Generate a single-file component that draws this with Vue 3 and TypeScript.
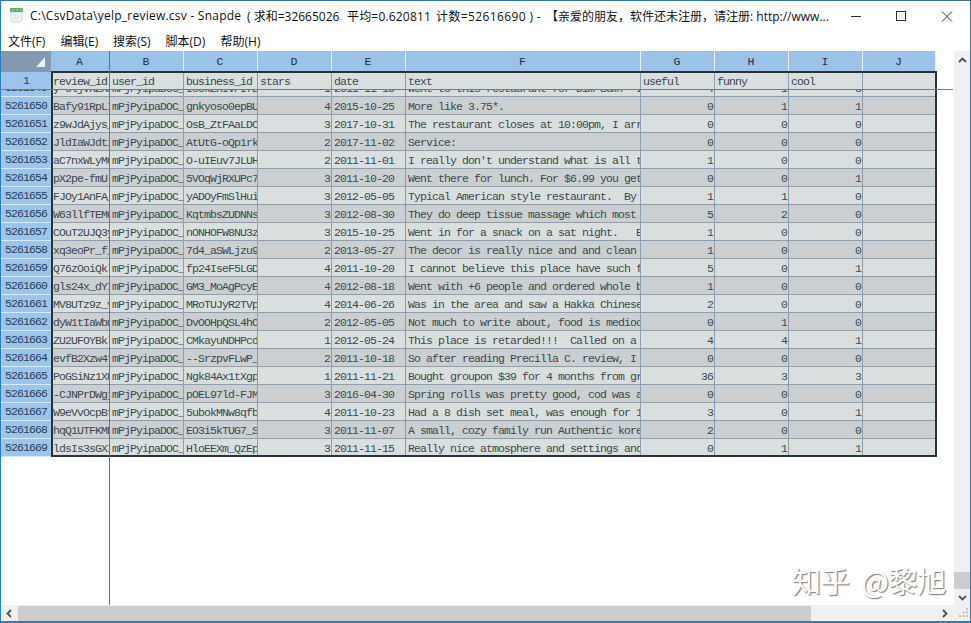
<script setup lang="ts">
interface Row {
  id: string
  cells: string[]
}

const letters = ['A', 'B', 'C', 'D', 'E', 'F', 'G', 'H', 'I', 'J']
const titles = ['review_id', 'user_id', 'business_id', 'stars', 'date', 'text', 'useful', 'funny', 'cool', '']
const menus = ['文件(F)', '编辑(E)', '搜索(S)', '脚本(D)', '帮助(H)']
const user = 'mPjPyipaDOC_'

const source: string[][] = [
  ['y-6ljvXZXm', 'IoOkZhIvPIfB', '1', '2011-11-16', 'Went to this restaurant for Dim Sum.  I', '4', '1', '3'],
  ['Bafy91RpLI', 'gnkyoso0epBU', '4', '2015-10-25', 'More like 3.75*.', '0', '1', '1'],
  ['z9wJdAjys_', 'OsB_ZtFAaLDC', '3', '2017-10-31', 'The restaurant closes at 10:00pm, I arr', '0', '0', '0'],
  ['JldIaWJdti', 'AtUtG-oQp1rk', '2', '2017-11-02', 'Service:', '0', '0', '0'],
  ['aC7nxWLyMO', 'O-uIEuv7JLUH', '2', '2011-11-01', "I really don't understand what is all t", '1', '0', '0'],
  ['pX2pe-fmU', '5VOqWjRXUPc7', '3', '2011-10-20', 'Went there for lunch. For $6.99 you get', '0', '0', '1'],
  ['FJOy1AnFA_', 'yADOyFmSlHui', '3', '2012-05-05', 'Typical American style restaurant.  By', '1', '1', '0'],
  ['W63llfTEMO', 'KqtmbsZUDNNs', '3', '2012-08-30', 'They do deep tissue massage which most', '5', '2', '0'],
  ['COuT2UJQ3y', 'nONHOFW8NU3z', '3', '2015-10-25', 'Went in for a snack on a sat night.   B', '1', '0', '0'],
  ['xq3eoPr_f_', '7d4_aSWLjzu9', '2', '2013-05-27', 'The decor is really nice and and clean', '1', '0', '0'],
  ['Q76zOoiQkl', 'fp24IseF5LGD', '4', '2011-10-20', 'I cannot believe this place have such f', '5', '0', '1'],
  ['gls24x_dYI', 'GM3_MoAgPcyE', '4', '2012-08-18', 'Went with +6 people and ordered whole b', '1', '0', '0'],
  ['MV8UTz9z_v', 'MRoTUJyR2TVp', '4', '2014-06-26', 'Was in the area and saw a Hakka Chinese', '2', '0', '0'],
  ['dyW1tIaWbm', 'DvOOHpQSL4hO', '2', '2012-05-05', 'Not much to write about, food is medioc', '0', '1', '0'],
  ['ZU2UFOYBkl', 'CMkayuNDHPcd', '1', '2012-05-24', 'This place is retarded!!!  Called on a', '4', '4', '1'],
  ['evfB2Xzw4t', '--SrzpvFLwP_', '2', '2011-10-18', 'So after reading Precilla C. review, I', '0', '0', '0'],
  ['PoGSiNz1XU', 'Ngk84Ax1tXgp', '1', '2011-11-21', 'Bought groupon $39 for 4 months from gr', '36', '3', '3'],
  ['-CJNPrDWgj', 'pOEL97ld-FJM', '3', '2016-04-30', 'Spring rolls was pretty good, cod was a', '0', '0', '0'],
  ['W9eVvOcpBt', '5ubokMNw8qfb', '4', '2011-10-23', 'Had a 8 dish set meal, was enough for 1', '3', '0', '1'],
  ['hqQ1UTFKMD', 'EO3i5kTUG7_S', '3', '2011-11-07', 'A small, cozy family run Authentic kore', '2', '0', '0'],
  ['ldsIs3sGXI', 'HloEEXm_QzEp', '3', '2011-11-15', 'Really nice atmosphere and settings and', '0', '1', '1'],
]

const rows: Row[] = source.map((r, i) => ({
  id: String(5261649 + i),
  cells: [r[0], user, ...r.slice(1), ''],
}))

const numeric = (col: number): boolean => col === 3 || (col >= 6 && col <= 8)
</script>

<template>
  <div class="window">
    <header class="titlebar">
      <svg class="app-icon" width="14" height="15" viewBox="0 0 14 15">
        <path d="M1 4h11v8l-2 2H1z" fill="#f4f5f4" stroke="#d3d6d3" />
        <rect x="0" y="0" width="13" height="4" fill="#5fae6e" />
        <path d="M2 2h2M6 2h2M10 2h2" stroke="#a6d8a9" />
        <path d="M3 7h7M3 9h7M3 11h5" stroke="#dde1de" />
      </svg>
      <div class="title">
        <span class="t1">C:\CsvData\yelp_review.csv - Snapde</span>
        <span class="t2">( 求和=32665026</span>
        <span class="t3">平均=0.620811</span>
        <span class="t4">计数=52616690 ) -</span>
        <span class="t5">【亲爱的朋友，软件还未注册，请注册: http://www...</span>
      </div>
      <svg class="controls" width="112" height="14" viewBox="0 0 112 14" fill="none" stroke="#333">
        <path d="M2 7.5h10" />
        <rect x="47.500" y="2.500" width="9" height="9" />
        <path d="M50 5h1M53 5h1M50 9h1M53 9h1" stroke="#bbb" />
        <path d="M93 2.500l10 10M103 2.500l-10 10" />
      </svg>
    </header>
    <nav class="menubar">
      <span v-for="m in menus" :key="m">{{ m }}</span>
    </nav>
    <div class="body">
      <main class="sheet">
        <div class="selection"></div>
        <div class="line letters">
          <div class="corner">
            <svg width="10" height="10" viewBox="0 0 10 10"><path d="M9 0v10H0z" fill="#eef3f7" /></svg>
          </div>
          <div v-for="l in letters" :key="l" class="cell">{{ l }}</div>
        </div>
        <div class="line frozen">
          <div class="num">1</div>
          <div v-for="(t, c) in titles" :key="c" class="cell">{{ t }}</div>
        </div>
        <div v-for="(row, i) in rows" :key="row.id" class="line" :class="{ dark: i % 2 === 1, partial: i === 0 }">
          <div class="num">{{ row.id }}</div>
          <div v-for="(v, c) in row.cells" :key="c" class="cell" :class="{ right: numeric(c) }">{{ v }}</div>
        </div>
        <div class="freeze-v"></div>
        <div class="freeze-h"></div>
        <div class="watermark"><span>知乎</span><span>@黎旭</span></div>
      </main>
      <aside class="vscroll">
        <svg width="9" height="6" viewBox="0 0 9 6"><path d="M1 5l3.500-3.500L8 5" /></svg>
        <div class="track"><div class="thumb"></div></div>
        <svg width="9" height="6" viewBox="0 0 9 6"><path d="M1 1l3.500 3.500L8 1" /></svg>
      </aside>
    </div>
    <footer class="hscroll">
      <svg width="6" height="9" viewBox="0 0 6 9"><path d="M5 1L1.500 4.500 5 8" /></svg>
      <div class="thumb"></div>
      <div class="space"></div>
      <svg width="6" height="9" viewBox="0 0 6 9"><path d="M1 1l3.500 3.500L1 8" /></svg>
      <svg class="grip" width="10" height="10" viewBox="0 0 10 10">
        <path d="M7 0h2v2H7zM3.500 3.500h2v2h-2zM7 3.500h2v2H7zM0 7h2v2H0zM3.500 7h2v2h-2zM7 7h2v2H7z" />
      </svg>
    </footer>
  </div>
</template>

<style>
body {
  margin: 0;
  overflow: hidden;
}
</style>

<style scoped>
.window {
  box-sizing: border-box;
  width: 971px;
  height: 623px;
  display: flex;
  flex-direction: column;
  border: 1px solid #2b7eb8;
  border-bottom-width: 2px;
  border-top-color: #3a7595;
  background: #fff;
  font-family: "Open Sans", "Noto Sans CJK SC", sans-serif;
  color: #111;
}
.titlebar {
  height: 29px;
  flex: none;
  display: flex;
  align-items: center;
  font-size: 12px;
  white-space: pre;
}
.app-icon {
  width: 14px;
  margin-left: 9px;
}
.title {
  display: flex;
  flex: none;
  margin-left: 6px;
  width: 819px;
}
.title span { flex: none; }
.t1 { width: 217px; letter-spacing: 0.24px; }
.t2 { width: 100px; }
.t3 { width: 89px; letter-spacing: 0.18px; }
.t4 { width: 110px; letter-spacing: 0.38px; }
.t5 { width: 283px; }
.controls {
  flex: none;
}
.menubar {
  height: 21px;
  flex: none;
  display: flex;
  align-items: center;
  padding-left: 7px;
  font-size: 12px;
}
.menubar span {
  width: 52.500px;
  white-space: nowrap;
}
.menubar span:nth-child(4) { width: 55px; }
.body {
  height: 554px;
  flex: none;
  display: flex;
}
.sheet {
  position: relative;
  width: 953px;
  height: 554px;
  font-family: "Liberation Mono", monospace;
  font-size: 11.5px;
  letter-spacing: -0.9px;
  color: #3c4a4f;
  overflow: hidden;
}
.line {
  display: grid;
  grid-template-columns: 50px 59px 74px 74px 74px 74px 235px 74px 74px 74px 73px;
  grid-template-rows: 18px;
  width: 935px;
  height: 18px;
  line-height: 19px;
  background: #d9dedf;
}
.line.dark {
  background: #cbcfd1;
}
.cell {
  box-sizing: border-box;
  padding-left: 2px;
  overflow: hidden;
  white-space: pre;
  border-right: 1px solid #8c9fb0;
  border-bottom: 1px solid #8c9fb0;
}
.cell.right {
  padding-right: 1px;
  text-align: right;
}
.num {
  box-sizing: border-box;
  background: #9dc5ec;
  border-bottom: 1px solid #d7e9f8;
  color: #263f55;
  text-align: center;
  line-height: 18px;
}
.letters {
  grid-template-rows: 21px;
  height: 21px;
  line-height: 22px;
  background: #9bc3ea;
}
.letters .cell {
  padding: 0 2px 0 0;
  text-align: center;
  color: #173448;
  border-right-color: #e8f3fc;
  border-bottom: 0;
}
.corner {
  display: flex;
  justify-content: flex-end;
  align-items: center;
  padding-right: 5px;
  background: #8399b2;
}
.frozen {
  height: 18px;
}
.frozen .cell {
  border-bottom: 0;
}
.partial {
  height: 7px;
  overflow: hidden;
  align-content: end;
}
.selection {
  position: absolute;
  box-sizing: border-box;
  z-index: 2;
  left: 50px;
  top: 20px;
  width: 886px;
  height: 386px;
  border: 2px solid #2a3337;
}
.freeze-v {
  position: absolute;
  z-index: 3;
  left: 108px;
  top: 0;
  width: 1px;
  height: 554px;
  background: #6d7880;
}
.freeze-h {
  position: absolute;
  z-index: 3;
  left: 0;
  top: 38px;
  width: 952px;
  height: 1px;
  background: #727c83;
}
.watermark {
  position: absolute;
  left: 791px;
  top: 508px;
  display: flex;
  gap: 12px;
  font-family: "Noto Sans CJK SC", sans-serif;
  font-size: 29px;
  line-height: 42px;
  letter-spacing: -0.3px;
  color: #fff;
  text-shadow: 1px 1px 1px #888, 1px 1px 1px #aaa;
}
.vscroll {
  box-sizing: border-box;
  width: 16px;
  display: flex;
  flex-direction: column;
  align-items: center;
  padding: 6px 0 4px;
  background: #f0f0f0;
}
svg {
  flex: none;
}
.vscroll path,
.hscroll svg:not(.grip) path {
  fill: none;
  stroke: #505050;
  stroke-width: 1.8;
}
.track {
  flex: 1;
  width: 16px;
  display: flex;
  align-items: flex-end;
  padding-bottom: 6px;
}
.track .thumb {
  width: 16px;
  height: 17px;
  background: #cdcdcd;
}
.hscroll {
  height: 16px;
  flex: none;
  display: flex;
  align-items: center;
  padding-left: 5px;
  background: #f0f0f0;
}
.hscroll .thumb {
  width: 793px;
  height: 15px;
  margin-left: 6px;
  background: #cdcdcd;
}
.space {
  width: 131px;
}
.grip {
  margin-left: 11px;
  fill: #bfbfbf;
}
</style>
